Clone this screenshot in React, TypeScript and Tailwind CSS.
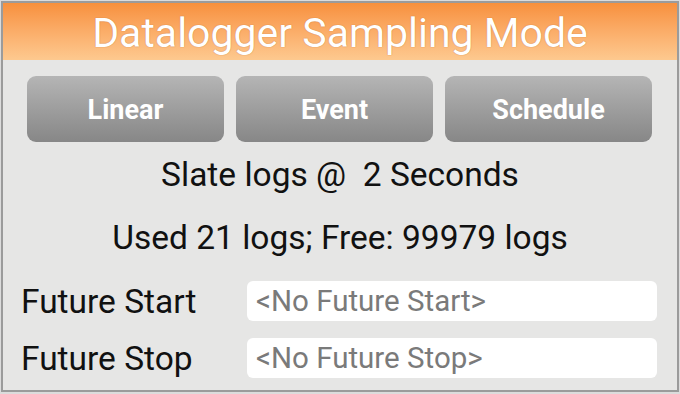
export default function App() {
  const modes = ['Linear', 'Event', 'Schedule'];
  return (
    <div className="w-[680px] h-[394px] bg-[#dcdcdc] p-px font-['Roboto',sans-serif]">
      <div className="h-[391px] border-[2px] border-[#9b9b9b] bg-[#e6e6e5] flex flex-col">
        <div className="h-[57px] bg-gradient-to-b from-[#f7903c] to-[#fdc98f] flex items-center justify-center">
          <h1 className="text-[41px] leading-none text-white [text-shadow:0_0_1px_#b8652a] pt-[3px]">
            Datalogger Sampling Mode
          </h1>
        </div>
        <div className="flex gap-3 px-[24px] pt-[16px]">
          {modes.map((m) => (
            <button
              key={m}
              className={`h-[66px] rounded-[9px] bg-gradient-to-b from-[#b5b5b5] to-[#878787] text-white font-bold text-[27px] flex items-center justify-center pt-[3px] ${
                m === 'Schedule' ? 'w-[207px]' : 'w-[197px]'
              }`}
            >
              {m}
            </button>
          ))}
        </div>
        <div className="text-center text-[33.5px] text-[#111] leading-none mt-[16px]">
          Slate logs @&nbsp; 2 Seconds
        </div>
        <div className="text-center text-[33.5px] text-[#111] leading-none mt-[29px]">
          Used 21 logs; Free: 99979 logs
        </div>
        <div className="flex flex-col gap-[17px] mt-[27px] pl-[18px] pr-[20px]">
          {['Future Start', 'Future Stop'].map((l) => (
            <div key={l} className="flex items-center">
              <span className="w-[226px] text-[33.5px] text-[#111] leading-none pt-[2px]">{l}</span>
              <div className="flex-1 h-[40px] bg-white rounded-[6px] flex items-center pl-[9px] text-[29.5px] text-[#7a7a7a]">
                {`<No ${l}>`}
              </div>
            </div>
          ))}
        </div>
      </div>
    </div>
  );
}
